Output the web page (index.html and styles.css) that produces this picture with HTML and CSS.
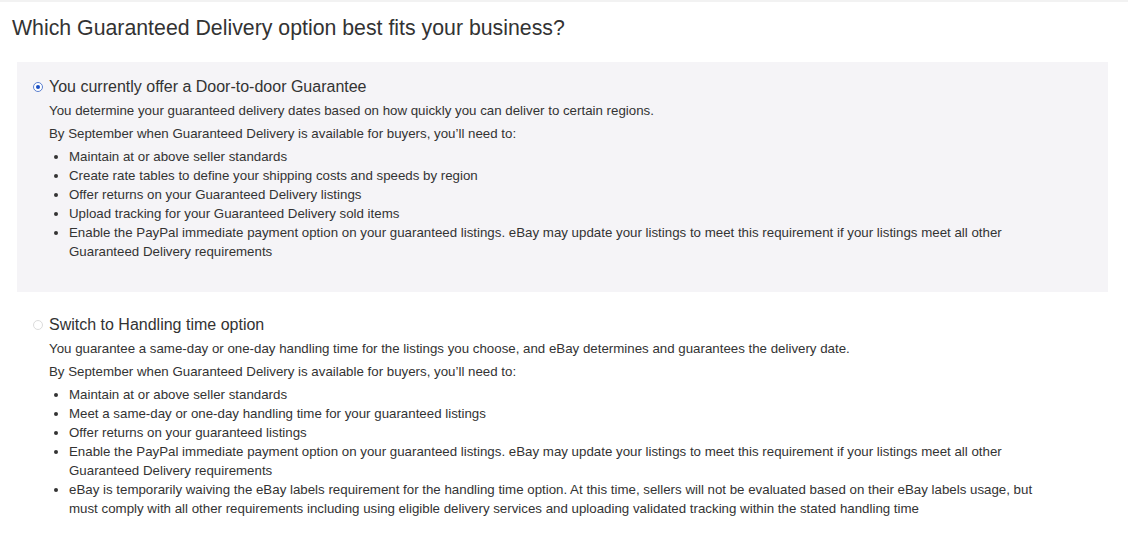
FILE: index.html
```html
<!DOCTYPE html>
<html lang="en">
<head>
  <meta charset="UTF-8">
  <meta name="viewport" content="width=device-width, initial-scale=1.0">
  <title>Guaranteed Delivery options</title>
  <link rel="stylesheet" href="styles.css">
</head>
<body>
  <div class="top-strip"></div>

  <h1 class="page-title">Which Guaranteed Delivery option best fits your business?</h1>

  <div class="option option-selected">
    <div class="option-head">
      <span class="radio radio-checked"></span>
      <span class="option-title">You currently offer a Door-to-door Guarantee</span>
    </div>
    <div class="option-body">
      <p>You determine your guaranteed delivery dates based on how quickly you can deliver to certain regions.</p>
      <p>By September when Guaranteed Delivery is available for buyers, you’ll need to:</p>
      <ul>
        <li>Maintain at or above seller standards</li>
        <li>Create rate tables to define your shipping costs and speeds by region</li>
        <li>Offer returns on your Guaranteed Delivery listings</li>
        <li>Upload tracking for your Guaranteed Delivery sold items</li>
        <li>Enable the PayPal immediate payment option on your guaranteed listings. eBay may update your listings to meet this requirement if your listings meet all other Guaranteed Delivery requirements</li>
      </ul>
    </div>
  </div>

  <div class="option">
    <div class="option-head">
      <span class="radio"></span>
      <span class="option-title">Switch to Handling time option</span>
    </div>
    <div class="option-body">
      <p>You guarantee a same-day or one-day handling time for the listings you choose, and eBay determines and guarantees the delivery date.</p>
      <p>By September when Guaranteed Delivery is available for buyers, you’ll need to:</p>
      <ul>
        <li>Maintain at or above seller standards</li>
        <li>Meet a same-day or one-day handling time for your guaranteed listings</li>
        <li>Offer returns on your guaranteed listings</li>
        <li>Enable the PayPal immediate payment option on your guaranteed listings. eBay may update your listings to meet this requirement if your listings meet all other Guaranteed Delivery requirements</li>
        <li>eBay is temporarily waiving the eBay labels requirement for the handling time option. At this time, sellers will not be evaluated based on their eBay labels usage, but must comply with all other requirements including using eligible delivery services and uploading validated tracking within the stated handling time</li>
      </ul>
    </div>
  </div>
</body>
</html>
```

FILE: styles.css
```css
body {
  font-family: 'Liberation Sans', Arial, sans-serif;
  margin: 0;
  padding: 0;
  background: #fff;
  color: #333;
}

.top-strip {
  height: 2px;
  background: #f2f2f2;
}

.page-title {
  font-size: 21.3px;
  font-weight: normal;
  line-height: 24px;
  margin: 14px 0 0 12px;
  color: #333;
}

.option {
  margin: 8px 20px 0 17px;
  padding: 15px 16px 31px 16px;
}

.option-selected {
  margin-top: 22px;
  background: #f5f4f7;
}

.option-head {
  display: flex;
  align-items: center;
  gap: 6px;
}

.option-title {
  font-size: 16px;
  line-height: 20px;
}

.radio {
  width: 8px;
  height: 8px;
  border: 1px solid #dcdcdc;
  border-radius: 50%;
  background: #fff;
  position: relative;
  flex-shrink: 0;
}

.radio-checked {
  border-color: #5b7fcf;
}

.radio-checked::after {
  content: "";
  position: absolute;
  left: 2px;
  top: 2px;
  width: 4px;
  height: 4px;
  border-radius: 50%;
  background: #1a4fc4;
}

.option-body {
  padding-left: 16px;
  font-size: 13.3px;
  line-height: 19px;
}

.option-body p {
  margin: 4px 0 0 0;
}

.option-body ul {
  margin: 4px 0 0 0;
  padding: 0 40px 0 20px;
}
```
